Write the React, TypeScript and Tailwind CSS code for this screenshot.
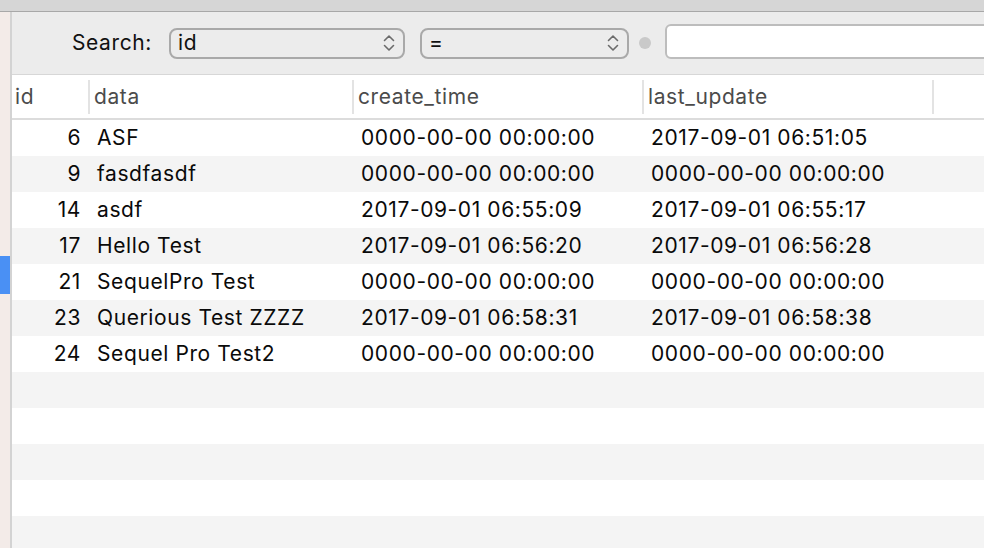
const rows = [
  { id: 6, data: "ASF", created: "0000-00-00 00:00:00", updated: "2017-09-01 06:51:05" },
  { id: 9, data: "fasdfasdf", created: "0000-00-00 00:00:00", updated: "0000-00-00 00:00:00" },
  { id: 14, data: "asdf", created: "2017-09-01 06:55:09", updated: "2017-09-01 06:55:17" },
  { id: 17, data: "Hello Test", created: "2017-09-01 06:56:20", updated: "2017-09-01 06:56:28" },
  { id: 21, data: "SequelPro Test", created: "0000-00-00 00:00:00", updated: "0000-00-00 00:00:00" },
  { id: 23, data: "Querious Test ZZZZ", created: "2017-09-01 06:58:31", updated: "2017-09-01 06:58:38" },
  { id: 24, data: "Sequel Pro Test2", created: "0000-00-00 00:00:00", updated: "0000-00-00 00:00:00" },
];

// empty striped rows under the data
const fillers = 5;

function Chevrons() {
  return (
    <svg width="12" height="18" viewBox="0 0 12 18" fill="none" stroke="#6b6b6b" strokeWidth="1.6" strokeLinecap="round" strokeLinejoin="round">
      <path d="M1.5 6.5 L6 2 L10.5 6.5" />
      <path d="M1.5 11.5 L6 16 L10.5 11.5" />
    </svg>
  );
}

function PopUp({ value, width }: { value: string; width: string }) {
  return (
    <div className={`${width} flex h-[31px] shrink-0 items-center justify-between rounded-[8px] border-2 border-[#a9a9a9] bg-[#ececec] pl-[7px] pr-[8px]`}>
      <span className="text-[21px] tracking-[0.6px] text-[#111]">{value}</span>
      <Chevrons />
    </div>
  );
}

function HeaderCell({ label, width, first }: { label: string; width: string; first?: boolean }) {
  return (
    <div className={`${width} flex h-full items-center`}>
      {!first && <span className="h-[34px] w-[2px] bg-[#e3e3e3]" />}
      <span className={`${first ? "pl-[3px]" : "pl-[4px]"} text-[21px] tracking-[0.6px] text-[#4b4b4b]`}>{label}</span>
    </div>
  );
}

export default function App() {
  return (
    <div
      className="flex h-[548px] w-[984px] flex-col overflow-hidden bg-white"
      style={{ fontFamily: "Inter, 'Liberation Sans', sans-serif" }}
    >
      <div className="h-[12px] shrink-0 border-b border-[#a8a8a8] bg-[#d6d6d6]" />
      <div className="flex flex-1">
        {/* source list edge */}
        <div className="flex w-[12px] shrink-0 flex-col border-r-2 border-[#d3d3d3] bg-[#f3ebe8]">
          <div className="h-[244px]" />
          <div className="h-[38px] bg-[#4a90f4]" />
        </div>

        <div className="flex min-w-0 flex-1 flex-col">
          <div className="flex h-[63px] shrink-0 items-center overflow-hidden border-b border-[#d7d7d7] bg-[#ececec] pl-[60px]">
            <span className="w-[80px] shrink-0 text-[21px] tracking-[0.6px] text-[#111]">Search:</span>
            <div className="ml-[17px] shrink-0">
              <PopUp value="id" width="w-[236px]" />
            </div>
            <div className="ml-[15px] shrink-0">
              <PopUp value="=" width="w-[209px]" />
            </div>
            <span className="ml-[10px] h-[12px] w-[12px] shrink-0 rounded-full bg-[#c9c9c9]" />
            <div className="ml-[14px] h-[35px] w-[340px] shrink-0 -translate-y-[2px] rounded-[6px] border-2 border-[#bdbdbd] bg-white" />
          </div>

          <div className="flex h-[45px] shrink-0 border-b-2 border-[#dcdcdc]">
            <HeaderCell label="id" width="w-[76px]" first />
            <HeaderCell label="data" width="w-[264px]" />
            <HeaderCell label="create_time" width="w-[290px]" />
            <HeaderCell label="last_update" width="w-[290px]" />
            <HeaderCell label="" width="flex-1" />
          </div>

          {rows.map((r, i) => (
            <div key={r.id} className={`flex h-[36px] shrink-0 items-center text-[21px] tracking-[0.6px] text-[#0a0a0a] ${i % 2 ? "bg-[#f4f4f4]" : "bg-white"}`}>
              <div className="w-[76px] pr-[7px] text-right">{r.id}</div>
              <div className="w-[264px] pl-[9px]">{r.data}</div>
              <div className="w-[290px] pl-[9px]">{r.created}</div>
              <div className="w-[290px] pl-[9px]">{r.updated}</div>
            </div>
          ))}
          {Array.from({ length: fillers }).map((_, i) => (
            <div key={i} className={`h-[36px] shrink-0 ${(rows.length + i) % 2 ? "bg-[#f4f4f4]" : "bg-white"}`} />
          ))}
        </div>
      </div>
    </div>
  );
}
